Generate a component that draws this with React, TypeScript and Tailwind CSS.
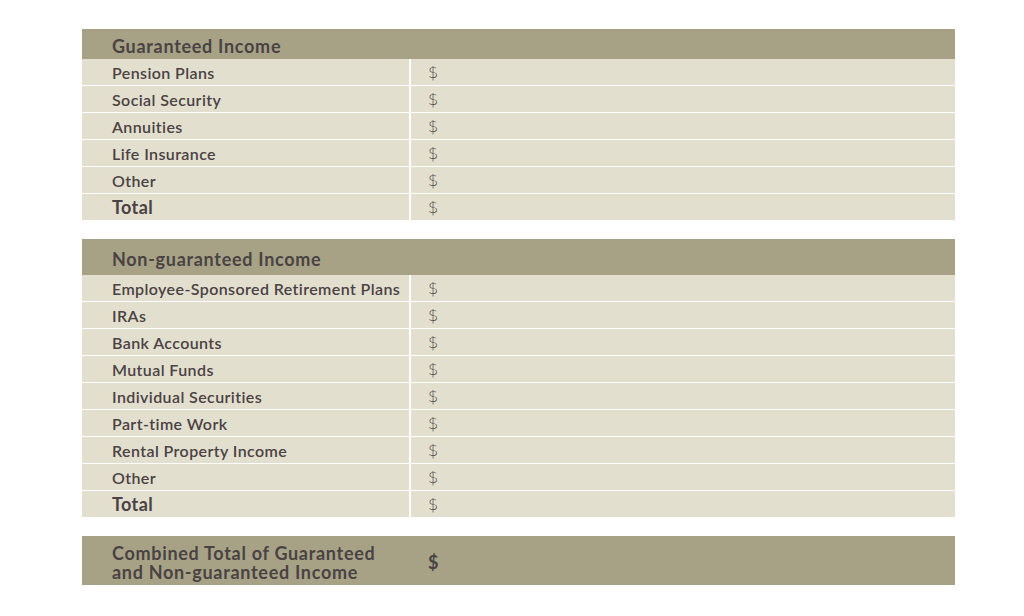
import React from "react";

const guaranteed = ["Pension Plans", "Social Security", "Annuities", "Life Insurance", "Other"];
const nonGuaranteed = [
  "Employee-Sponsored Retirement Plans",
  "IRAs",
  "Bank Accounts",
  "Mutual Funds",
  "Individual Securities",
  "Part-time Work",
  "Rental Property Income",
  "Other",
];

function Row({ label, bold }: { label: string; bold?: boolean }) {
  return (
    <div className="flex h-[26px]">
      <div
        className={`flex w-[327px] items-center bg-[#e3dfcf] pl-[30px] pt-px ${
          bold ? "text-[18px] font-bold tracking-[0.4px]" : "text-[16px] font-semibold tracking-[0.4px]"
        }`}
      >
        {label}
      </div>
      <div className="w-[2px] bg-white" />
      <div
        className="flex flex-1 items-center bg-[#e3dfcf] pl-[17px] pt-px text-[16px] font-light text-[#5a5352]"
        style={{ fontFamily: "'DejaVu Sans', sans-serif" }}
      >
        $
      </div>
    </div>
  );
}

function Section({ title, rows, headerH }: { title: string; rows: string[]; headerH: string }) {
  return (
    <div className="flex flex-col">
      <div className={`flex items-center bg-[#a7a286] pl-[30px] pt-[4px] text-[18px] font-bold tracking-[0.7px] ${headerH}`}>
        {title}
      </div>
      <div className="flex flex-col gap-px bg-white">
        {rows.map((r, i) => (
          <Row key={i} label={r} />
        ))}
        <Row label="Total" bold />
      </div>
    </div>
  );
}

export default function App() {
  return (
    <div
      className="flex h-[616px] w-[1024px] flex-col bg-white pl-[82px] pt-[29px] text-[#4a4243]"
      style={{ fontFamily: "Lato, sans-serif" }}
    >
      <div className="flex w-[873px] flex-col">
        <Section title="Guaranteed Income" rows={guaranteed} headerH="h-[30px]" />
        <div className="h-[19px]" />
        <Section title="Non-guaranteed Income" rows={nonGuaranteed} headerH="h-[36px]" />
        <div className="h-[19px]" />
        <div className="flex h-[49px] items-center bg-[#a7a286] pt-[4px]">
          <div className="w-[329px] pl-[30px] text-[18px] font-bold leading-[19px] tracking-[0.7px]">
            Combined Total of Guaranteed
            <br />
            and Non-guaranteed Income
          </div>
          <div className="pl-[17px] text-[18px] font-bold">$</div>
        </div>
      </div>
    </div>
  );
}
